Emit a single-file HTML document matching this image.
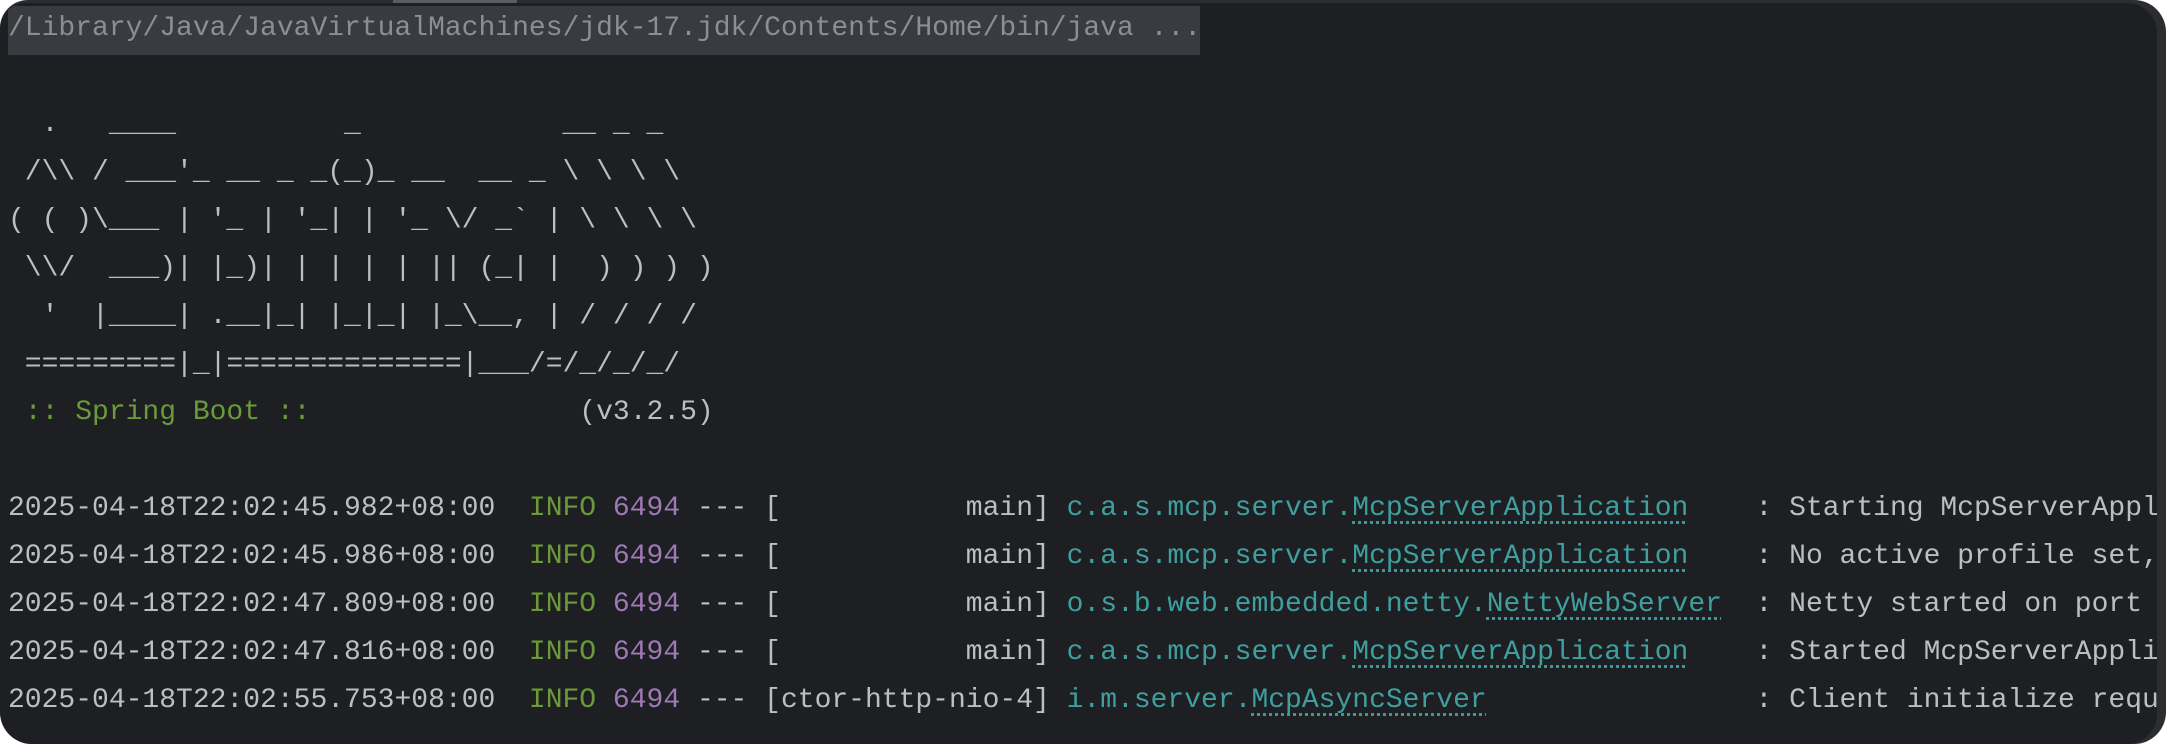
<!DOCTYPE html>
<html><head><meta charset="utf-8"><style>
html,body{margin:0;padding:0;background:#fff;width:2166px;height:744px;overflow:hidden}
.win{position:absolute;left:0;top:0;width:2166px;height:744px;background:#2b2d30;border-radius:28px 32px 32px 32px;overflow:hidden}
.inner{position:absolute;left:0;top:3px;width:2157px;height:741px;background:#1e1f22;border-radius:26px 30px 30px 30px;overflow:hidden}
.tab{position:absolute;left:393px;top:0;width:124px;height:3px;background:#5a5d63}
.hdr{position:absolute;left:8px;top:3px;width:1192px;height:49px;background:#393b40}
pre{position:absolute;left:8px;top:2px;margin:0;font-family:"Liberation Mono",monospace;font-size:28px;line-height:48px;color:#bcbec4;white-space:pre}
.h{color:#8c8e94}
.g{color:#6a9a3a}
.p{color:#9f78b8}
.t{color:#3f9f9f}
.u{text-decoration:underline dotted #3f9f9f;text-underline-offset:6px}
</style></head><body>
<div class="win"><div class="inner">
<div class="hdr"></div>
<pre><span class="h">/Library/Java/JavaVirtualMachines/jdk-17.jdk/Contents/Home/bin/java ...</span>

  .   ____          _            __ _ _
 /\\ / ___'_ __ _ _(_)_ __  __ _ \ \ \ \
( ( )\___ | '_ | '_| | '_ \/ _` | \ \ \ \
 \\/  ___)| |_)| | | | | || (_| |  ) ) ) )
  '  |____| .__|_| |_|_| |_\__, | / / / /
 =========|_|==============|___/=/_/_/_/
<span class="g"> :: Spring Boot ::</span>                (v3.2.5)

2025-04-18T22:02:45.982+08:00  <span class="g">INFO</span> <span class="p">6494</span> --- [           main] <span class="t">c.a.s.mcp.server.<span class="u">McpServerApplication</span></span>    : Starting McpServerApplication using Java
2025-04-18T22:02:45.986+08:00  <span class="g">INFO</span> <span class="p">6494</span> --- [           main] <span class="t">c.a.s.mcp.server.<span class="u">McpServerApplication</span></span>    : No active profile set, falling back
2025-04-18T22:02:47.809+08:00  <span class="g">INFO</span> <span class="p">6494</span> --- [           main] <span class="t">o.s.b.web.embedded.netty.<span class="u">NettyWebServer</span></span>  : Netty started on port 8080
2025-04-18T22:02:47.816+08:00  <span class="g">INFO</span> <span class="p">6494</span> --- [           main] <span class="t">c.a.s.mcp.server.<span class="u">McpServerApplication</span></span>    : Started McpServerApplication in
2025-04-18T22:02:55.753+08:00  <span class="g">INFO</span> <span class="p">6494</span> --- [ctor-http-nio-4] <span class="t">i.m.server.<span class="u">McpAsyncServer</span></span>                : Client initialize request</pre>
</div><div class="tab"></div></div>
</body></html>
